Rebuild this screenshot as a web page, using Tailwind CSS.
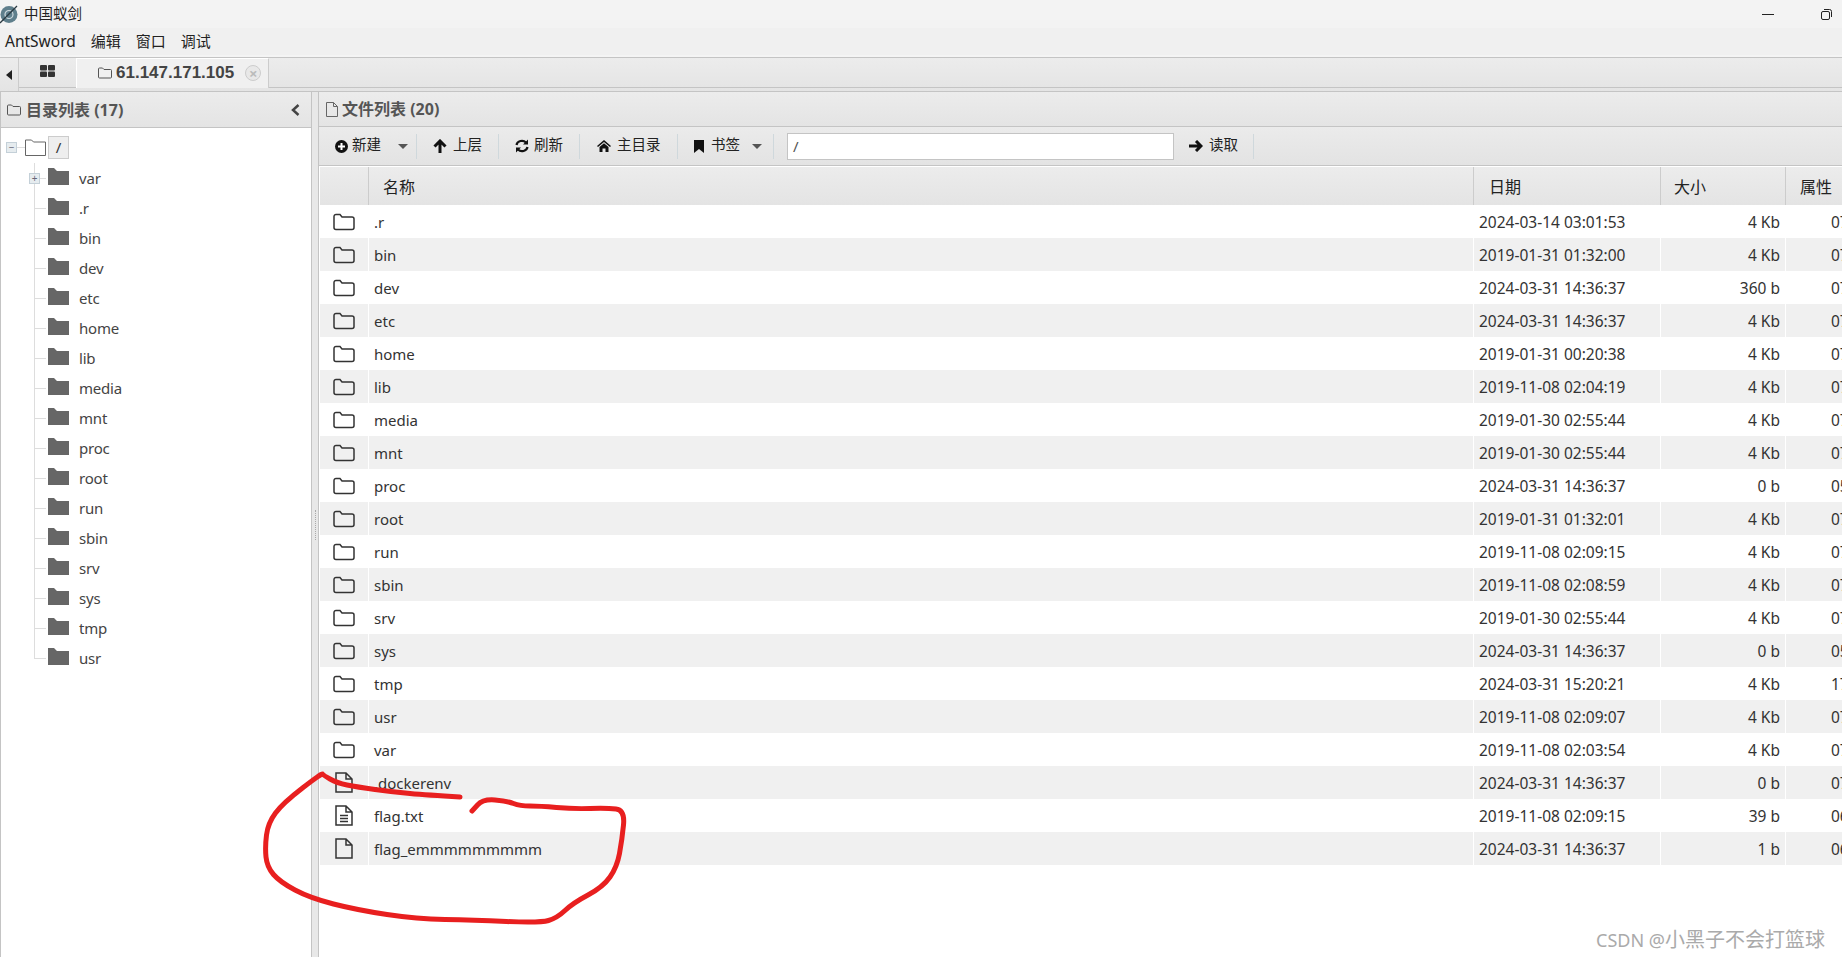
<!DOCTYPE html>
<html lang="zh-CN">
<head>
    <meta charset="UTF-8">
    <title>中国蚁剑</title>
    <script src="https://cdn.jsdelivr.net/npm/@tailwindcss/browser@4"></script>
</head>
<body class="relative h-screen w-screen overflow-hidden bg-white text-[#333] font-['Noto_Sans','Noto_Sans_CJK_SC',sans-serif]">
    <!-- Title bar -->
    <div class="flex items-center h-[28px] bg-[#f3f3f3] text-[14.5px] text-[#222]">
        <svg class="w-[19px] h-[19px] ml-[-1px]" viewBox="0 0 19 19">
            <circle cx="10" cy="9.500" r="8.500" fill="#5f7f8c"/>
            <circle cx="10" cy="9.500" r="4" fill="none" stroke="#cfdadf" stroke-width="1.200"/>
            <path d="M1 18 L18 1" stroke="#2a3a42" stroke-width="1.300"/>
        </svg>
        <span class="ml-[6px]">中国蚁剑</span>
        <div class="ml-auto flex items-center">
            <span class="block w-[12px] h-px bg-[#222]"></span>
            <svg class="w-[13px] h-[13px] ml-[46px] mr-[9px]" viewBox="0 0 13 13" fill="none" stroke="#222">
                <rect x="1.5" y="3.5" width="8" height="8" rx="1.5"/>
                <path d="M4 1.5 h5.5 a2 2 0 0 1 2 2 v5.5"/>
            </svg>
        </div>
    </div>
    <!-- Menu -->
    <div class="flex items-center h-[27px] bg-[#f0f0f0] text-[15px] text-[#222] pl-[5px] gap-[15px]">
        <span class="text-[15.500px]">AntSword</span><span>编辑</span><span>窗口</span><span>调试</span>
    </div>
    <div class="h-[2px] bg-[#f4f4f4]"></div>
    <!-- Tabs -->
    <div class="flex h-[35px] border-t border-[#c4c4c4] border-b bg-gradient-to-b from-[#ececec] to-[#e4e4e4]">
        <div class="flex items-center justify-center w-[19px] border-r border-[#ccc]">
            <span class="w-0 h-0 border-y-[5px] border-y-transparent border-r-[6px] border-r-[#222]"></span>
        </div>
        <div class="flex items-center justify-center w-[57px] h-[30px] border-b border-[#c4c4c4] pb-[3px]">
            <svg class="w-[15px] h-[12px]" viewBox="0 0 15 12" fill="#333">
                <rect x="0" y="0" width="7" height="5.5" rx="1"/><rect x="8" y="0" width="7" height="5.5" rx="1"/>
                <rect x="0" y="6.5" width="7" height="5.5" rx="1"/><rect x="8" y="6.5" width="7" height="5.5" rx="1"/>
            </svg>
        </div>
        <div class="flex items-center w-[193px] h-[30px] pl-[21px] pb-[1px] bg-[#f0f0f0] border-x border-t border-white border-r-[#ccc] text-[#444] font-bold">
            <svg class="w-[14px] h-[12px] mr-[4px]" viewBox="0 0 14 12" fill="none" stroke="#555">
                <path d="M.5 2 a1 1 0 0 1 1-1 h3 l1.500 1.500 h6.500 a1 1 0 0 1 1 1 v6.500 a1 1 0 0 1-1 1 h-11 a1 1 0 0 1-1-1z"/>
            </svg>
            <span class="font-['Liberation_Sans','Noto_Sans_CJK_SC',sans-serif] text-[17px]">61.147.171.105</span>
            <span class="flex items-center justify-center w-[16px] h-[16px] ml-[11px] rounded-full border border-[#ccc] bg-[#e8e8e8] text-[#bbb] text-[15px] leading-none">×</span>
        </div>
        <div class="flex-1 h-[30px] border-b border-[#c4c4c4]"></div>
    </div>
    <!-- Main -->
    <div class="flex h-[865px]">
        <!-- Directory panel -->
        <div class="w-[312px] border-l border-r border-[#c4c4c4]">
            <div class="flex items-center h-[36px] bg-gradient-to-b from-[#ececec] to-[#e4e4e4] border-b border-[#c4c4c4] pl-[6px] pr-[11px] text-[#555] font-bold text-[16px]">
                <svg class="w-[14px] h-[12px] mr-[5px]" viewBox="0 0 14 12" fill="none" stroke="#555">
                    <path d="M.5 2 a1 1 0 0 1 1-1 h3 l1.500 1.500 h6.500 a1 1 0 0 1 1 1 v6.500 a1 1 0 0 1-1 1 h-11 a1 1 0 0 1-1-1z"/>
                </svg>
                <span>目录列表 (17)</span>
                <svg class="w-[9px] h-[12px] ml-auto" viewBox="0 0 9 12" fill="none" stroke="#444" stroke-width="2.500"><path d="M7.500 1 L2 6 L7.500 11"/></svg>
            </div>
            <div class="pt-[7px]">
                <div class="flex items-center h-[24px] pl-[5px]">
                    <span class="flex items-center justify-center w-[11px] h-[11px] border border-[#c4d0d8] bg-[#e6ecef] text-[#667] text-[10px] leading-none">−</span>
                    <span class="w-[8px] h-px bg-[#ddd]"></span>
                    <svg class="w-[21px] h-[17px]" viewBox="0 0 21 17" fill="#fff" stroke="#666">
                        <path d="M.5 16.500 V1 h6 l2 2 h12 v13.500z"/>
                    </svg>
                    <span class="flex items-center justify-center w-[21px] h-[23px] ml-[2px] bg-[#eee] border border-[#ccc] text-[15px]">/</span>
                </div>
                <div id="tree" class="mt-[4px] ml-[33px]"></div>
            </div>
        </div>
        <!-- Splitter -->
        <div class="flex items-center justify-center w-[7px] bg-[#e8e8e8] border-r border-[#c4c4c4]">
            <span class="block w-0 h-[30px] border-l border-dotted border-[#aaa]"></span>
        </div>
        <!-- File panel -->
        <div class="flex-1 min-w-0">
            <div class="flex items-center h-[35px] bg-gradient-to-b from-[#ececec] to-[#e4e4e4] border-b border-[#c4c4c4] pl-[7px] text-[#555] font-bold text-[16px]">
                <svg class="w-[12px] h-[15px] mr-[4px]" viewBox="0 0 12 15" fill="none" stroke="#666">
                    <path d="M.5 .5 h7 l4 4 v10 h-11z M7.500 .5 v4 h4"/>
                </svg>
                <span>文件列表 (20)</span>
            </div>
            <!-- Toolbar -->
            <div class="flex items-center h-[39px] bg-gradient-to-b from-[#ebebeb] to-[#e3e3e3] border-b border-[#c4c4c4] text-[14.500px] text-[#222]">
                <div class="flex items-center w-[97px] pl-[16px] gap-[4px]">
                    <svg class="w-[13px] h-[13px]" viewBox="0 0 13 13"><circle cx="6.500" cy="6.500" r="6.500" fill="#111"/><path d="M6.500 3 v7 M3 6.500 h7" stroke="#fff" stroke-width="2"/></svg>
                    <span class="mb-[2px]">新建</span>
                    <span class="ml-[13px] w-0 h-0 border-x-[5px] border-x-transparent border-t-[5px] border-t-[#555]"></span>
                </div>
                <span class="w-px h-[25px] bg-[#cfd8dc]"></span>
                <div class="flex items-center w-[81px] pl-[16px] gap-[6px]">
                    <svg class="w-[14px] h-[14px]" viewBox="0 0 14 14" fill="none" stroke="#111" stroke-width="3"><path d="M1.500 7.500 L7 2 L12.500 7.500 M7 2.500 V14"/></svg>
                    <span class="mb-[2px]">上层</span>
                </div>
                <span class="w-px h-[25px] bg-[#cfd8dc]"></span>
                <div class="flex items-center w-[80px] pl-[16px] gap-[5px]">
                    <svg class="w-[14px] h-[14px]" viewBox="0 0 14 14" fill="none" stroke="#111" stroke-width="2.200"><path d="M1.500 6 A5.500 5 0 0 1 11 3.500 M12.500 8 A5.500 5 0 0 1 3 10.500"/><path d="M13 0.500 V5.500 H8 Z M1 13.500 V8.500 H6 Z" fill="#111" stroke="none"/></svg>
                    <span class="mb-[2px]">刷新</span>
                </div>
                <span class="w-px h-[25px] bg-[#cfd8dc]"></span>
                <div class="flex items-center w-[97px] pl-[17px] gap-[6px]">
                    <svg class="w-[14px] h-[12px]" viewBox="0 0 14 12" fill="#111"><path d="M7 0 L14 6 L13 7 L7 2 L1 7 L0 6 Z M2.500 7 L7 3.200 L11.500 7 V12 H8.500 V8.500 H5.500 V12 H2.500 Z"/></svg>
                    <span class="mb-[2px]">主目录</span>
                </div>
                <span class="w-px h-[25px] bg-[#cfd8dc]"></span>
                <div class="flex items-center w-[95px] pl-[16px] gap-[7px]">
                    <svg class="w-[10px] h-[13px]" viewBox="0 0 10 13" fill="#111"><path d="M0 0 H10 V13 L5 9 L0 13 Z"/></svg>
                    <span class="mb-[2px]">书签</span>
                    <span class="ml-[5px] w-0 h-0 border-x-[5px] border-x-transparent border-t-[5px] border-t-[#555]"></span>
                </div>
                <span class="w-px h-[25px] bg-[#cfd8dc]"></span>
                <div class="flex items-center w-[387px] h-[27px] ml-[13px] mt-[1px] pl-[5px] bg-white border border-[#c4c4c4] text-[15px] text-[#555]">/</div>
                <div class="flex items-center w-[79px] pl-[15px] gap-[6px]">
                    <svg class="w-[14px] h-[12px]" viewBox="0 0 14 12" fill="none" stroke="#111" stroke-width="3"><path d="M7 1 L12 6 L7 11 M12 6 H0"/></svg>
                    <span class="mb-[2px]">读取</span>
                </div>
                <span class="w-px h-[25px] bg-[#cfd8dc]"></span>
            </div>
            <!-- File table -->
            <div class="pl-[1px] pt-[1px]">
                <div class="grid grid-cols-[49px_1105px_187px_125px_56px] h-[38px] bg-gradient-to-b from-[#ececec] to-[#e4e4e4] text-[16px] text-[#222]">
                    <div class="border-r border-[#ccc]"></div>
                    <div class="flex items-center pl-[14px] pt-[1px] border-r border-[#ccc]">名称</div>
                    <div class="flex items-center pl-[15px] pt-[1px] border-r border-[#ccc]">日期</div>
                    <div class="flex items-center pl-[13px] pt-[1px] border-r border-[#ccc]">大小</div>
                    <div class="flex items-center pl-[14px] pt-[1px]">属性</div>
                </div>
                <div id="rows"></div>
            </div>
        </div>
    </div>
    <!-- Hand-drawn marker -->
    <svg class="absolute inset-0 w-full h-full pointer-events-none" viewBox="0 0 1842 957" fill="none">
        <path id="marker" stroke="#e81f1f" stroke-width="5" stroke-linecap="round" stroke-linejoin="round"/>
    </svg>
    <div class="absolute left-[1596px] top-[925px] text-[18px] text-[#aaa] whitespace-nowrap">CSDN @<span class="text-[20px]">小黑子不会打篮球</span></div>

    <script>
        const folderDirs = ['var', '.r', 'bin', 'dev', 'etc', 'home', 'lib', 'media', 'mnt', 'proc', 'root', 'run', 'sbin', 'srv', 'sys', 'tmp', 'usr'];
        const files = [
            ['.r', '2024-03-14 03:01:53', '4 Kb', '0755', 'dir'],
            ['bin', '2019-01-31 01:32:00', '4 Kb', '0755', 'dir'],
            ['dev', '2024-03-31 14:36:37', '360 b', '0755', 'dir'],
            ['etc', '2024-03-31 14:36:37', '4 Kb', '0755', 'dir'],
            ['home', '2019-01-31 00:20:38', '4 Kb', '0755', 'dir'],
            ['lib', '2019-11-08 02:04:19', '4 Kb', '0755', 'dir'],
            ['media', '2019-01-30 02:55:44', '4 Kb', '0755', 'dir'],
            ['mnt', '2019-01-30 02:55:44', '4 Kb', '0755', 'dir'],
            ['proc', '2024-03-31 14:36:37', '0 b', '0555', 'dir'],
            ['root', '2019-01-31 01:32:01', '4 Kb', '0700', 'dir'],
            ['run', '2019-11-08 02:09:15', '4 Kb', '0755', 'dir'],
            ['sbin', '2019-11-08 02:08:59', '4 Kb', '0755', 'dir'],
            ['srv', '2019-01-30 02:55:44', '4 Kb', '0755', 'dir'],
            ['sys', '2024-03-31 14:36:37', '0 b', '0555', 'dir'],
            ['tmp', '2024-03-31 15:20:21', '4 Kb', '1777', 'dir'],
            ['usr', '2019-11-08 02:09:07', '4 Kb', '0755', 'dir'],
            ['var', '2019-11-08 02:03:54', '4 Kb', '0755', 'dir'],
            ['.dockerenv', '2024-03-31 14:36:37', '0 b', '0755', 'file'],
            ['flag.txt', '2019-11-08 02:09:15', '39 b', '0644', 'text'],
            ['flag_emmmmmmmmm', '2024-03-31 14:36:37', '1 b', '0644', 'file']
        ];

        const icons = {
            dir: '<svg class="w-[22px] h-[18px]" viewBox="0 0 22 18" fill="none" stroke="#333" stroke-width="1.500"><path d="M1 3.500 a2 2 0 0 1 2-2 h4 l2 2.500 h10 a2 2 0 0 1 2 2 v8.500 a2 2 0 0 1-2 2 H3 a2 2 0 0 1-2-2z"/></svg>',
            file: '<svg class="w-[18px] h-[21px]" viewBox="0 0 18 21" fill="none" stroke="#333" stroke-width="1.500"><path d="M1 1 h10 l6 6 v13 H1z M11 1 v6 h6"/></svg>',
            text: '<svg class="w-[18px] h-[21px]" viewBox="0 0 18 21" fill="none" stroke="#333" stroke-width="1.500"><path d="M1 1 h10 l6 6 v13 H1z M11 1 v6 h6 M5 10.500 h8 M5 13.500 h8 M5 16.500 h8"/></svg>'
        };

        const tree = document.getElementById('tree');
        folderDirs.forEach((name, i) => {
            const last = i === folderDirs.length - 1;
            const row = document.createElement('div');
            row.className = 'relative flex items-center h-[30px] text-[15px] text-[#444]';
            row.innerHTML =
                '<span class="absolute left-0 top-0 w-px bg-[#ddd] ' + (last ? 'h-[15px]' : 'h-full') + '"></span>' +
                '<span class="w-[12px] h-px bg-[#ddd]"></span>' +
                (i === 0 ? '<span class="absolute left-[-5px] flex items-center justify-center w-[11px] h-[11px] border border-[#c4d0d8] bg-[#e6ecef] text-[#667] text-[10px] leading-none">+</span>' : '') +
                '<svg class="w-[21px] h-[17px] ml-[2px] mb-[3px]" viewBox="0 0 21 17" fill="#666"><path d="M0 17 V0 h6 l3 3 h12 v14z"/></svg>' +
                '<span class="ml-[10px] tracking-[-0.2px]">' + name + '</span>';
            tree.appendChild(row);
        });

        const rows = document.getElementById('rows');
        files.forEach((f, i) => {
            const bg = i % 2 ? 'bg-[#f0f0f0]' : 'bg-white';
            const row = document.createElement('div');
            row.className = 'grid grid-cols-[49px_1105px_187px_125px_56px] h-[33px] text-[15.500px] text-[#333] ' + bg;
            row.innerHTML =
                '<div class="flex items-center justify-center border-r border-white">' + icons[f[4]] + '</div>' +
                '<div class="flex items-center pl-[5px] pt-[2px] text-[15px] border-r border-white">' + f[0] + '</div>' +
                '<div class="flex items-center pl-[5px] pt-[2px] border-r border-white">' + f[1] + '</div>' +
                '<div class="flex items-center justify-end pr-[5px] pt-[2px] border-r border-white">' + f[2] + '</div>' +
                '<div class="flex items-center pl-[45px] pt-[2px] overflow-hidden">' + f[3] + '</div>';
            rows.appendChild(row);
        });

        // smooth the marker stroke through its sampled points
        const pts = [[460,797],[427,795],[393,792],[357,787],[337,783],[323,775],[322,773],[283,803],[268,823],[265,847],[267,867],[280,882],[310,898],[357,910],[417,919],[473,920],[540,923],[557,918],[573,903],[603,887],[617,867],[622,840],[625,810],[607,808],[573,809],[540,806],[520,806],[507,801],[483,799],[472,811]];
        let d = 'M' + pts[0].join(' ');
        for (let i = 1; i < pts.length - 1; i++) {
            const mx = (pts[i][0] + pts[i + 1][0]) / 2, my = (pts[i][1] + pts[i + 1][1]) / 2;
            d += ' Q' + pts[i].join(' ') + ' ' + mx + ' ' + my;
        }
        d += ' L' + pts[pts.length - 1].join(' ');
        document.getElementById('marker').setAttribute('d', d);
    </script>
</body>
</html>
